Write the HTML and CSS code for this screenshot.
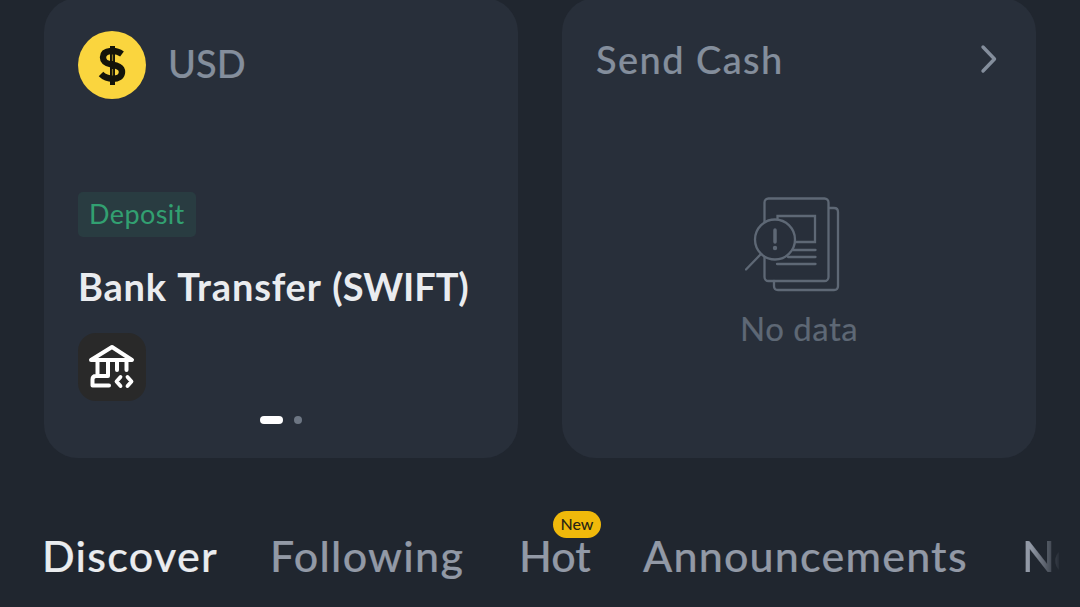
FILE: index.html
```html
<!DOCTYPE html>
<html lang="en">
<head>
<meta charset="utf-8">
<title>Discover</title>
<link rel="stylesheet" href="styles.css">
</head>
<body>
<main class="cards">
  <section class="card">
    <div class="currency">
      <svg class="coin" viewBox="0 0 68 68"><circle cx="34" cy="34" r="34" fill="#fad53e"/><path d="M44 23C40.500 20.500 36.500 19.500 33 20C27.500 20.500 25 23 25 26.300C25 31.500 29 32.800 34 33.700C39 34.600 44 35.800 44 41C44 45.500 40 47.700 35 47.700C30.500 47.700 26.500 46.500 23 43" fill="none" stroke="#14140a" stroke-width="6.400"/><path d="M34.500 15V54" stroke="#14140a" stroke-width="5"/><path d="M34.500 23.500V30M34.500 38V44.500" stroke="#8d7a20" stroke-width="1.200"/></svg>
      <span class="code">USD</span>
    </div>
    <div class="tag"><span>Deposit</span></div>
    <h2 class="method">Bank Transfer <span class="network">(SWIFT)</span></h2>
    <svg class="bank" viewBox="0 0 68 68"><rect width="68" height="68" rx="18" fill="#292929"/><g fill="none" stroke="#fff" stroke-width="4" stroke-linecap="round" stroke-linejoin="round"><path d="M13 27L34 14L54 27Z"/><path d="M19.500 28V43M30 28V43H18Q14.500 43 14.500 46.500V52.500H31M39 28V37M48.500 28V37"/><path d="M42.500 44L38.500 48.500L42.500 53M49.500 44L53.500 48.500L49.500 53" stroke-width="3.800"/></g></svg>
    <div class="pager"><i class="page current"></i><i class="page"></i></div>
  </section>
  <section class="card">
    <header class="send"><h2><span>Send Cash</span></h2><svg class="chevron" viewBox="0 0 18 30"><path d="M3 3L14.500 15L3 27" fill="none" stroke="#848e9c" stroke-width="3.400" stroke-linecap="round" stroke-linejoin="round"/></svg></header>
    <div class="empty">
      <svg class="papers" viewBox="0 0 100 100" fill="none" stroke="#5e6875" stroke-width="2.300" stroke-linecap="round" stroke-linejoin="round"><path d="M84 13H89Q93 13 93 17V91Q93 95 89 95H33Q29 95 29 91V86"/><rect x="19.500" y="3.500" width="64" height="82.500" rx="4"/><path d="M32.500 25V21H70V47H50M48 55H70.500M43 62H70.500M32 69H70.500" stroke-linejoin="miter"/><circle cx="30" cy="44.500" r="20" fill="#282f3a"/><path d="M16 59L1 74.500"/><path d="M30 35V47" stroke-width="3.500"/><circle cx="30" cy="53" r="2.200" fill="#5e6875" stroke="none"/></svg>
      <p><span>No data</span></p>
    </div>
  </section>
</main>
<nav class="tabs">
  <a class="tab discover">Discover</a>
  <a class="tab following">Following</a>
  <a class="tab hot">Hot<span class="badge">New</span></a>
  <a class="tab announcements">Announcements</a>
  <a class="tab news">News</a>
</nav>
</body>
</html>
```
FILE: styles.css
```css
* { box-sizing: border-box; }
body { margin: 0; width: 1080px; height: 607px; overflow: hidden; background: #20262f; color: #848e9c; font-family: Lato, "Liberation Sans", sans-serif; font-weight: 500; }
h2, p { margin: 0; font-weight: 500; }
svg { display: block; }
.cards { display: grid; grid-template-columns: 474px 474px; gap: 44px; height: 458px; padding-left: 44px; }
.card { height: 460px; margin-top: -2px; padding: 33px 34px 0; border-radius: 34px; background: #282f3a; }
.currency { display: flex; align-items: center; gap: 22px; height: 68px; }
.coin, .bank { width: 68px; height: 68px; }
.code { height: 68px; font-size: 38px; line-height: 65px; -webkit-text-stroke: 0.2px; }
.tag { width: 118px; height: 45px; margin-top: 93px; padding-left: 11px; border-radius: 5px; background: #293c41; color: #32a071; font-size: 27px; line-height: 43px; font-weight: 400; letter-spacing: 0.4px; }
.method { margin-top: 25px; height: 50px; color: #eaecef; font-size: 38px; line-height: 48px; font-weight: 700; letter-spacing: 0.8px; word-spacing: 1.5px; white-space: nowrap; }
.network { letter-spacing: -0.1px; }
.bank { margin-top: 21px; }
.pager { display: flex; align-items: center; gap: 11px; height: 8px; margin: 15px 0 0 182px; }
.page { width: 8px; height: 8px; border-radius: 4px; background: #6d7683; }
.current { width: 23px; background: #fff; }
.send { display: flex; justify-content: space-between; height: 58px; }
.send h2 { font-size: 38px; line-height: 56px; letter-spacing: 1.4px; -webkit-text-stroke: 0.2px; }
.chevron { width: 18px; height: 30px; margin: 13px 4px 0 0; }
.empty { padding-top: 106px; color: #5e6875; }
.papers { width: 100px; height: 100px; margin-left: 149px; }
.empty p { margin: 11px 0 0 144px; font-size: 33px; line-height: 44px; font-weight: 400; letter-spacing: 0.5px; -webkit-text-stroke: 0.2px; }
.tabs { display: flex; width: 1059px; height: 149px; padding: 70px 0 0 42px; overflow: hidden; color: #9299a6; font-size: 43px; line-height: 55px; white-space: nowrap; -webkit-text-stroke: 0.2px; }
.tab { position: relative; flex: none; }
.discover { width: 228px; color: #eaecef; letter-spacing: 1.3px; }
.following { width: 249px; letter-spacing: 1.3px; }
.hot { width: 124px; letter-spacing: 0; }
.announcements { width: 379px; letter-spacing: 1.2px; }
.news { letter-spacing: -0.5px; mask-image: linear-gradient(90deg, #000 0, #000 9px, transparent 39px); }
.badge { position: absolute; left: 34px; top: -17px; width: 48px; height: 27px; border-radius: 14px; background: #f0b90b; color: #292514; font-size: 16px; line-height: 26px; text-align: center; letter-spacing: 0; -webkit-text-stroke: 0; }
```
